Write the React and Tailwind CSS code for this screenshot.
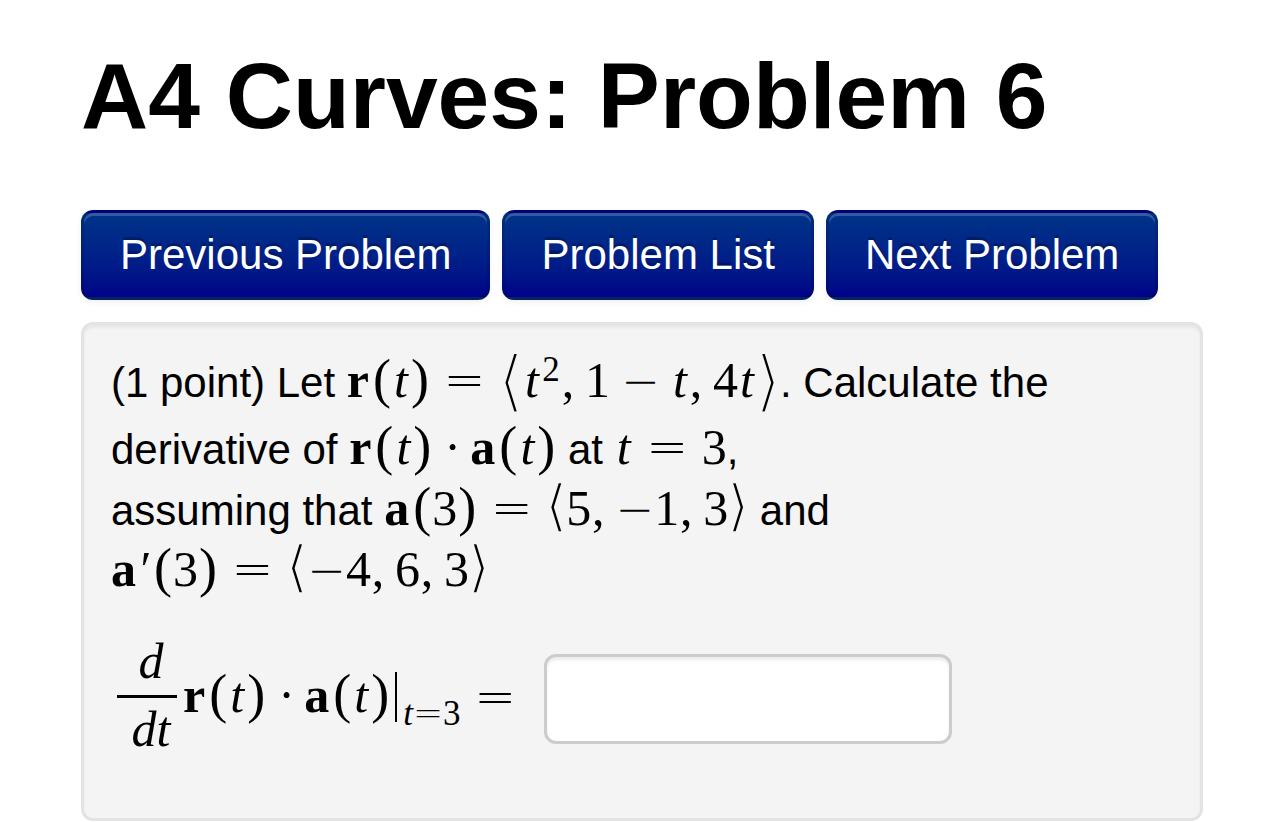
import React from 'react';

// TeX-like token boxes: each kind of symbol has one width
const Vec = ({ children }) => (
  <b className="inline-block pr-[3px] font-bold">{children}</b>
);

const Paren = ({ children }) => (
  <span className="inline-block w-5 text-center text-[54px] leading-none">{children}</span>
);

const Var = ({ children }) => (
  <i className="inline-block w-[18px] text-center italic">{children}</i>
);

const Num = ({ children }) => (
  <span className="inline-block w-[25px] text-center">{children}</span>
);

const Comma = () => <span className="mr-[10px] inline-block w-[14px] text-center">,</span>;

const Minus = () => (
  <span className="inline-flex w-[39px] justify-center font-['DejaVu_Sans'] text-[46px] leading-none font-extralight">−</span>
);

const Equals = () => (
  <span className="mx-[15px] inline-flex w-[39px] justify-center font-['DejaVu_Sans'] text-[50px] leading-none font-extralight">=</span>
);

const Dot = () => <span className="mx-3 inline-block w-[14px] text-center">·</span>;

// the stroke in the panel colour thins the bracket
const Angle = ({ children }) => (
  <span className="inline-flex w-5 justify-center font-['DejaVu_Sans'] text-[56px] leading-[48px] [-webkit-text-stroke:2px_#f4f4f4]">{children}</span>
);

const BigAngle = ({ children }) => (
  <span className="inline-flex w-6 justify-center align-[-7px] font-['DejaVu_Sans'] text-[68px] leading-[54px] [-webkit-text-stroke:3px_#f4f4f4]">{children}</span>
);

const Fn = ({ name, arg }) => (
  <>
    <Vec>{name}</Vec>
    <Paren>(</Paren>
    {arg}
    <Paren>)</Paren>
  </>
);

const Tex = ({ children }) => (
  <span className="font-['Liberation_Serif',serif] text-[50px] leading-none whitespace-nowrap">{children}</span>
);

const NavButton = ({ children }) => (
  <button
    type="button"
    className="rounded-xl border-[3px] border-black/10 border-b-black/25 bg-linear-to-b from-[#003388] to-[#000088] px-9 text-[42px] leading-[84px] whitespace-nowrap text-white shadow-[inset_0_3px_0_rgba(255,255,255,0.2),0_3px_6px_rgba(0,0,0,0.05)] [text-shadow:0_-3px_0_rgba(0,0,0,0.25)]"
  >
    {children}
  </button>
);

export default function App() {
  const t = <Var>t</Var>;

  return (
    <main className="bg-white px-[81px] pt-[50px] font-['Liberation_Sans',sans-serif] text-black">
      <h1 className="mb-[67px] text-[93px] leading-none font-bold">A4 Curves: Problem 6</h1>

      <nav className="mb-[22px] flex gap-3">
        <NavButton>Previous Problem</NavButton>
        <NavButton>Problem List</NavButton>
        <NavButton>Next Problem</NavButton>
      </nav>

      <section className="rounded-xl border-[3px] border-[#e3e3e3] bg-[#f4f4f4] px-[27px] pt-[22px] pb-[52px] text-[42px] shadow-[inset_0_3px_3px_rgba(0,0,0,0.05)]">
        <div className="leading-[60px]">
          <p className="leading-[72px]">
            (1 point) Let{' '}
            <Tex>
              <Fn name="r" arg={t} />
              <Equals />
              <BigAngle>⟨</BigAngle>
              {t}
              <sup className="relative -top-4 inline-block w-5 text-center text-[35px] leading-none align-baseline">2</sup>
              <Comma />
              <Num>1</Num>
              <span className="mx-[11px]"><Minus /></span>
              {t}
              <Comma />
              <Num>4</Num>
              {t}
              <BigAngle>⟩</BigAngle>
            </Tex>
            . Calculate the
          </p>
          <p>
            derivative of{' '}
            <Tex>
              <Fn name="r" arg={t} />
              <Dot />
              <Fn name="a" arg={t} />
            </Tex>{' '}
            at{' '}
            <Tex>
              {t}
              <Equals />
              <Num>3</Num>
            </Tex>
            ,
          </p>
          <p>
            assuming that{' '}
            <Tex>
              <Fn name="a" arg={<Num>3</Num>} />
              <Equals />
              <Angle>⟨</Angle>
              <Num>5</Num>
              <Comma />
              <Minus />
              <Num>1</Num>
              <Comma />
              <Num>3</Num>
              <Angle>⟩</Angle>
            </Tex>{' '}
            and
          </p>
          <p>
            <Tex>
              <Vec>a</Vec>
              <span className="inline-block w-[14px] text-center">′</span>
              <Paren>(</Paren>
              <Num>3</Num>
              <Paren>)</Paren>
              <Equals />
              <Angle>⟨</Angle>
              <Minus />
              <Num>4</Num>
              <Comma />
              <Num>6</Num>
              <Comma />
              <Num>3</Num>
              <Angle>⟩</Angle>
            </Tex>
          </p>
        </div>

        <div className="mt-[30px] flex items-center pl-[6px]">
          <label htmlFor="answer" className="flex items-center pb-1">
            <span className="flex w-[60px] flex-col items-center pb-1 font-['Liberation_Serif',serif] text-[50px] leading-[58px] italic">
              <span className="pl-2">d</span>
              <span className="mt-[5px] mb-[2px] h-[3px] w-full bg-black" />
              <span className="pl-2">dt</span>
            </span>
            <span className="ml-[6px]">
              <Tex>
                <Fn name="r" arg={t} />
                <Dot />
                <Fn name="a" arg={t} />
              </Tex>
            </span>
            <span className="ml-[5px] h-[50px] w-[2px] bg-black" />
            <sub className="ml-[6px] self-end pb-10 font-['Liberation_Serif',serif] text-[35px] leading-none align-baseline">
              <i>t</i>
              <span className="font-['DejaVu_Sans'] text-[36px] leading-none font-extralight">=</span>3
            </sub>
            <Tex><Equals /></Tex>
          </label>
          <input
            id="answer"
            type="text"
            className="ml-[14px] h-[90px] w-[408px] rounded-xl border-[3px] border-[#cccccc] bg-white px-3 shadow-[inset_0_3px_3px_rgba(0,0,0,0.075)]"
          />
        </div>
      </section>
    </main>
  );
}
